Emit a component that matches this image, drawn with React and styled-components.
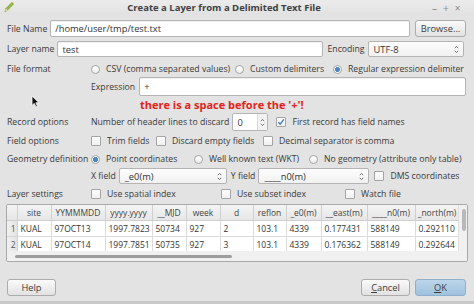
import React from "react";
import styled, { createGlobalStyle } from "styled-components";

const GlobalStyle = createGlobalStyle`
  html, body { margin:0; padding:0; }
  body {
    width:474px; height:304px; overflow:hidden;
    background:#e3e3e3;
    font-family:"Open Sans","DejaVu Sans",sans-serif;
    color:#3a3a3a;
  }
`;

const Window = styled.div`
  position:relative;
  width:474px;
  height:304px;
  box-sizing:border-box;
  display:flex;
  flex-direction:column;
  font-size:8.7px;
  border-bottom:3px solid #c9c9c9;
`;

const TitleBar = styled.div`
  height:15px;
  display:grid;
  grid-template-columns:16px 1fr 42px;
  align-items:center;
  background:linear-gradient(#ececec,#e1e1e1);
`;

const Title = styled.div`
  text-align:center;
  font-weight:700;
  font-size:9.5px;
  color:#404040;
`;

const Controls = styled.div`
  display:flex;
  gap:6px;
  color:#8a8a8a;
  font-size:10px;
`;

const Row = styled.div`
  display:flex;
  align-items:center;
  height:${p => p.h || 16}px;
  margin-top:${p => p.mt || 0}px;
  padding:0 8px 0 7px;
  flex:none;
`;

const Label = styled.span`
  flex:none;
  width:${p => (p.w ? `${p.w}px` : "auto")};
  margin-right:${p => p.mr || 0}px;
  white-space:nowrap;
`;

const TextInput = styled.div`
  flex:${p => (p.w ? "none" : 1)};
  width:${p => (p.w ? `${p.w}px` : "auto")};
  height:100%;
  box-sizing:border-box;
  background:#fff;
  border:1px solid #b4b4b4;
  border-radius:2px;
  padding:0 4px;
  display:flex;
  align-items:center;
  font-size:9.3px;
  color:#333;
  box-shadow:inset 0 1px 1px rgba(0,0,0,0.06);
`;

const Button = styled.div`
  flex:none;
  width:${p => p.w}px;
  height:${p => p.hh || 17}px;
  box-sizing:border-box;
  border:1px solid ${p => (p.primary ? "#8fb0cc" : "#acacac")};
  border-radius:3px;
  background:${p => (p.primary ? "linear-gradient(#bcd5ea,#9fc2de)" : "linear-gradient(#fafafa,#e2e2e2)")};
  display:flex;
  align-items:center;
  justify-content:center;
  font-size:9.3px;
  color:#3c3c3c;
  margin-left:${p => p.ml || 0}px;
`;

const SelectBox = styled.div`
  flex:none;
  width:${p => p.w}px;
  height:16px;
  box-sizing:border-box;
  margin-left:${p => p.ml || 0}px;
  border:1px solid #b4b4b4;
  border-radius:2px;
  background:linear-gradient(#fdfdfd,#f1f1f1);
  display:flex;
  align-items:center;
  justify-content:space-between;
  padding:0 4px 0 5px;
  font-size:9.3px;
  color:#333;
`;

const OptionGrid = styled.div`
  display:grid;
  grid-template-columns:${p => p.cols};
  align-items:center;
`;

const Option = styled.span`
  display:inline-flex;
  align-items:center;
  gap:6px;
  white-space:nowrap;
  margin-left:${p => p.ml || 0}px;
`;

const RadioCircle = styled.span`
  width:9px;
  height:9px;
  box-sizing:border-box;
  border-radius:50%;
  border:1px solid #a5a5a5;
  background:${p => (p.on ? "radial-gradient(circle,#4f86c6 0 2.2px,#fff 2.6px)" : "linear-gradient(#fff,#ececec)")};
  flex:none;
`;

const CheckBox = styled.span`
  width:10px;
  height:10px;
  box-sizing:border-box;
  border:1px solid #a5a5a5;
  border-radius:1px;
  background:linear-gradient(#fff,#efefef);
  flex:none;
  display:flex;
  align-items:center;
  justify-content:center;
`;

const Warning = styled.div`
  height:17px;
  padding-left:140px;
  display:flex;
  align-items:center;
  color:#e2231a;
  font-weight:700;
  font-size:11px;
  flex:none;
`;

const Spin = styled.div`
  flex:none;
  width:36px;
  height:18px;
  box-sizing:border-box;
  margin-left:3px;
  border:1px solid #b4b4b4;
  border-radius:2px;
  background:#fff;
  display:flex;
  align-items:center;
  justify-content:space-between;
  padding-left:4px;
  font-size:9.3px;
`;

const SpinArrows = styled.div`
  width:9px;
  height:100%;
  border-left:1px solid #d6d6d6;
  background:#f3f3f3;
  display:flex;
  align-items:center;
  justify-content:center;
`;

const TableFrame = styled.div`
  margin:2px 6px 0 6px;
  height:58px;
  box-sizing:border-box;
  border:1px solid #a9a9a9;
  border-radius:2px;
  background:#f4f4f4;
  display:flex;
  flex-direction:column;
  overflow:hidden;
  flex:none;
`;

const TableBody = styled.div`
  flex:1;
  display:flex;
  overflow:hidden;
`;

const TableClip = styled.div`
  flex:1;
  overflow:hidden;
`;

const Grid = styled.table`
  border-collapse:collapse;
  table-layout:fixed;
  width:452px;
  font-size:8.5px;
`;

const Th = styled.th`
  height:15px;
  padding:0;
  font-weight:400;
  text-align:center;
  white-space:nowrap;
  overflow:hidden;
  background:linear-gradient(#f4f4f4,#e6e6e6);
  border-right:1px solid #d0d0d0;
  border-bottom:1px solid #cfcfcf;
  color:#444;
`;

const Td = styled.td`
  height:15px;
  padding:0 0 0 3px;
  white-space:nowrap;
  overflow:hidden;
  background:#fff;
  border-right:1px solid #dcdcdc;
  border-bottom:1px solid #dcdcdc;
  color:#333;
`;

const RowHead = styled.td`
  padding:0 1px 0 0;
  text-align:right;
  background:linear-gradient(90deg,#f0f0f0,#e4e4e4);
  border-right:1px solid #cfcfcf;
  border-bottom:1px solid #d6d6d6;
  color:#555;
`;

const VScroll = styled.div`
  width:9px;
  flex:none;
  background:#f0f0f0;
  border-left:1px solid #e0e0e0;
  padding-top:4px;
  box-sizing:border-box;
`;

const VThumb = styled.div`
  width:4px;
  height:22px;
  margin-left:3px;
  border-radius:2px;
  background:#b9b9b9;
`;

const HScroll = styled.div`
  height:10px;
  flex:none;
  background:#f0f0f0;
  display:flex;
  align-items:center;
  padding-left:8px;
`;

const HThumb = styled.div`
  width:217px;
  height:3px;
  border-radius:2px;
  background:#9d9d9d;
`;

const ButtonRow = styled.div`
  margin-top:auto;
  margin-bottom:5px;
  padding:0 8px 0 7px;
  display:flex;
  align-items:center;
`;

const Spacer = styled.div`
  flex:1;
`;

const Cursor = styled.svg`
  position:absolute;
  left:31px;
  top:95px;
`;

const Arrows = () => (
  <svg width="5" height="9" viewBox="0 0 5 9">
    <path d="M0.8 3.2 L2.5 1.4 L4.2 3.2 M0.8 5.8 L2.5 7.6 L4.2 5.8" stroke="#666" strokeWidth="0.9" fill="none" />
  </svg>
);

const Tick = () => (
  <svg width="8" height="8" viewBox="0 0 8 8">
    <path d="M1.3 4.2 L3.2 6.2 L6.9 1.4" stroke="#4a7fbd" strokeWidth="1.5" fill="none" />
  </svg>
);

const Radio = ({ on, children, ml }) => (
  <Option ml={ml}>
    <RadioCircle on={on} />
    {children}
  </Option>
);

const Check = ({ on, children, ml }) => (
  <Option ml={ml}>
    <CheckBox>{on && <Tick />}</CheckBox>
    {children}
  </Option>
);

const columns = [
  ["", 10], ["site", 34], ["YYMMMDD", 54], ["yyyy.yyyy", 47], ["__MJD", 34], ["week", 34],
  ["d", 33], ["reflon", 33], ["_e0(m)", 35], ["__east(m)", 46], ["____n0(m)", 48], ["_north(m)", 44],
];

const rows = [
  ["KUAL", "97OCT13", "1997.7823", "50734", "927", "2", "103.1", "4339", "0.177431", "588149", "0.292110"],
  ["KUAL", "97OCT14", "1997.7851", "50735", "927", "3", "103.1", "4339", "0.176362", "588149", "0.292644"],
];

export default function App() {
  return (
    <Window>
      <GlobalStyle />
      <TitleBar>
        <svg width="12" height="13" viewBox="0 0 12 13" style={{ marginLeft: 3 }}>
          <path d="M2 11 L3 7.5 L9 1.5 L10.5 3 L4.5 9 Z" fill="#9bc33a" stroke="#5e8a1c" strokeWidth="0.7" />
          <path d="M9 1.5 L10.5 3 L11.3 2.2 L9.8 0.7 Z" fill="#e9c64a" />
          <path d="M2 11 L3 7.5 L4.5 9 Z" fill="#f1e3a8" />
        </svg>
        <Title>Create a Layer from a Delimited Text File</Title>
        <Controls>
          <span>–</span>
          <span>+</span>
          <span>×</span>
        </Controls>
      </TitleBar>

      <Row h={17} mt={5}>
        <Label mr={3}>File Name</Label>
        <TextInput>/home/user/tmp/test.txt</TextInput>
        <Button w={51} ml={5}>Browse...</Button>
      </Row>

      <Row h={16} mt={4}>
        <Label mr={3}>Layer name</Label>
        <TextInput w={266}>test</TextInput>
        <Label mr={3} style={{ marginLeft: 4 }}>Encoding</Label>
        <SelectBox w={96}>
          UTF-8
          <Arrows />
        </SelectBox>
      </Row>

      <Row h={16} mt={4}>
        <Label w={84}>File format</Label>
        <OptionGrid cols="144px 98px auto">
          <Radio>CSV (comma separated values)</Radio>
          <Radio>Custom delimiters</Radio>
          <Radio on>Regular expression delimiter</Radio>
        </OptionGrid>
      </Row>

      <Row h={19}>
        <Label w={84} />
        <Label mr={4}>Expression</Label>
        <TextInput>+</TextInput>
      </Row>

      <Warning>there is a space before the '+'!</Warning>

      <Row h={18}>
        <Label w={84}>Record options</Label>
        <Label>Number of header lines to discard</Label>
        <Spin>
          0
          <SpinArrows>
            <Arrows />
          </SpinArrows>
        </Spin>
        <Check on ml={8}>First record has field names</Check>
      </Row>

      <Row h={16} mt={2}>
        <Label w={84}>Field options</Label>
        <OptionGrid cols="65px 107px auto">
          <Check>Trim fields</Check>
          <Check>Discard empty fields</Check>
          <Check>Decimal separator is comma</Check>
        </OptionGrid>
      </Row>

      <Row h={16} mt={2}>
        <Label w={84}>Geometry definition</Label>
        <OptionGrid cols="103px 115px auto">
          <Radio on>Point coordinates</Radio>
          <Radio>Well known text (WKT)</Radio>
          <Radio>No geometry (attribute only table)</Radio>
        </OptionGrid>
      </Row>

      <Row h={16} mt={1}>
        <Label w={84} />
        <Label mr={3}>X field</Label>
        <SelectBox w={108}>
          _e0(m)
          <Arrows />
        </SelectBox>
        <Label mr={3} style={{ marginLeft: 4 }}>Y field</Label>
        <SelectBox w={111}>
          ____n0(m)
          <Arrows />
        </SelectBox>
        <Check ml={5}>DMS coordinates</Check>
      </Row>

      <Row h={16} mt={2}>
        <Label w={84}>Layer settings</Label>
        <OptionGrid cols="130px 124px auto">
          <Check>Use spatial index</Check>
          <Check>Use subset index</Check>
          <Check>Watch file</Check>
        </OptionGrid>
      </Row>

      <TableFrame>
        <TableBody>
          <TableClip>
            <Grid>
              <colgroup>
                {columns.map(([name, w]) => (
                  <col key={name || "n"} style={{ width: w }} />
                ))}
              </colgroup>
              <thead>
                <tr>
                  {columns.map(([name]) => (
                    <Th key={name || "n"}>{name}</Th>
                  ))}
                </tr>
              </thead>
              <tbody>
                {rows.map((r, i) => (
                  <tr key={i}>
                    <RowHead>{i + 1}</RowHead>
                    {r.map((v, j) => (
                      <Td key={j}>{v}</Td>
                    ))}
                  </tr>
                ))}
              </tbody>
            </Grid>
          </TableClip>
          <VScroll>
            <VThumb />
          </VScroll>
        </TableBody>
        <HScroll>
          <HThumb />
        </HScroll>
      </TableFrame>

      <ButtonRow>
        <Button w={49} hh={17}>Help</Button>
        <Spacer />
        <Button w={49} hh={17}><span><u>C</u>ancel</span></Button>
        <Button w={51} hh={17} ml={5} primary><span><u>O</u>K</span></Button>
      </ButtonRow>

      <Cursor width="9" height="13" viewBox="0 0 9 13">
        <path d="M1 1 L1 10.5 L3.3 8.4 L5 12 L6.5 11.3 L4.9 7.8 L8 7.8 Z" fill="#111" stroke="#fff" strokeWidth="0.8" />
      </Cursor>
    </Window>
  );
}
